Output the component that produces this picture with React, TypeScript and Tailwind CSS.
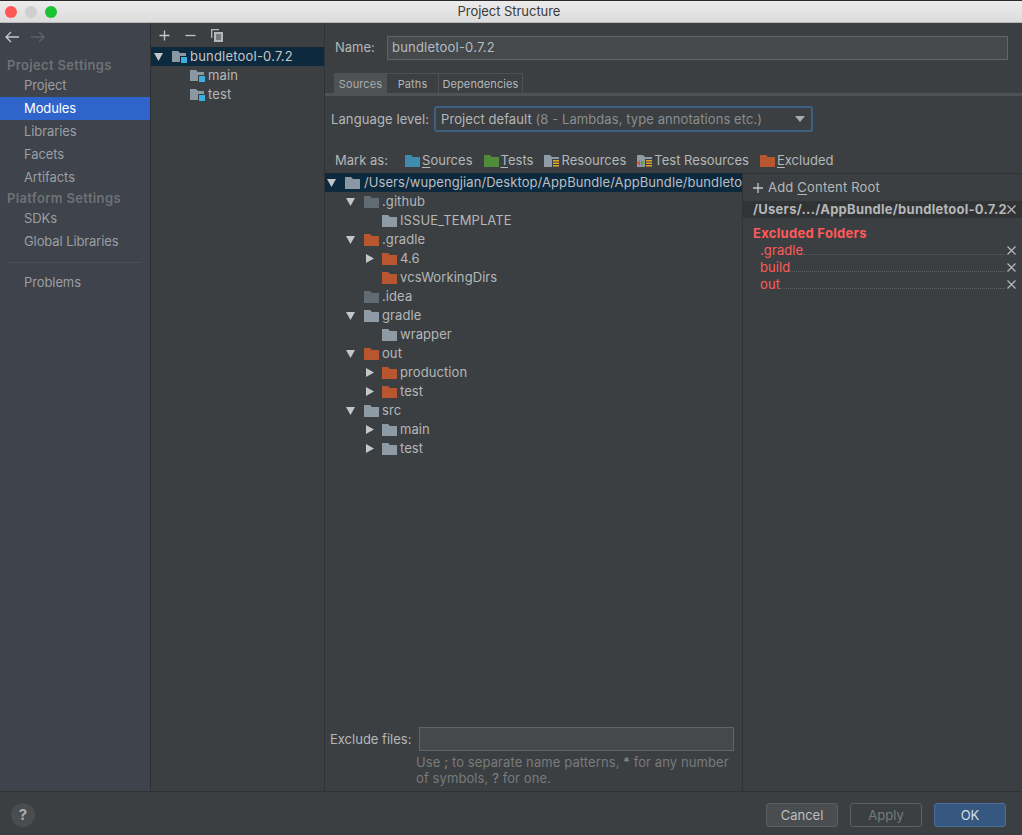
import type { ReactNode } from "react";

const FONT = { fontFamily: '"Inter", "Liberation Sans", sans-serif' };

type FolderProps = { color: string; badge?: boolean; className?: string };

function Folder({ color, badge, className }: FolderProps) {
  return (
    <svg width="15" height="13" viewBox="0 0 15 13" className={className}>
      {badge ? (
        <>
          <path d="M0 1h6l2 2h6v3H8v6H0z" fill={color} />
          <rect x="9" y="7" width="6" height="6" fill="#3bb0e0" />
        </>
      ) : (
        <path d="M0 1h6l2 2h7v10H0z" fill={color} />
      )}
    </svg>
  );
}

function Arrow({ open }: { open: boolean }) {
  return (
    <svg width="9" height="9" viewBox="0 0 9 9">
      {open ? <path d="M0 1h9L4.5 9z" fill="#c4c7c9" /> : <path d="M1 0l8 4.5L1 9z" fill="#c4c7c9" />}
    </svg>
  );
}

function CloseX() {
  return (
    <svg width="9" height="9" viewBox="0 0 9 9" className="shrink-0">
      <path d="M0.5 0.5l8 8M8.5 0.5l-8 8" stroke="#b4b7b9" strokeWidth="1.3" />
    </svg>
  );
}

type TreeRow = { depth: number; label: string; color: string; arrow?: "open" | "closed"; selected?: boolean };

const rows: TreeRow[] = [
  { depth: 0, label: "/Users/wupengjian/Desktop/AppBundle/AppBundle/bundletool-0.7.2", color: "#8a98a3", arrow: "open", selected: true },
  { depth: 1, label: ".github", color: "#626b72", arrow: "open" },
  { depth: 2, label: "ISSUE_TEMPLATE", color: "#8e9ba5" },
  { depth: 1, label: ".gradle", color: "#b8562f", arrow: "open" },
  { depth: 2, label: "4.6", color: "#b8562f", arrow: "closed" },
  { depth: 2, label: "vcsWorkingDirs", color: "#b8562f" },
  { depth: 1, label: ".idea", color: "#626b72" },
  { depth: 1, label: "gradle", color: "#8e9ba5", arrow: "open" },
  { depth: 2, label: "wrapper", color: "#8e9ba5" },
  { depth: 1, label: "out", color: "#b8562f", arrow: "open" },
  { depth: 2, label: "production", color: "#b8562f", arrow: "closed" },
  { depth: 2, label: "test", color: "#b8562f", arrow: "closed" },
  { depth: 1, label: "src", color: "#8e9ba5", arrow: "open" },
  { depth: 2, label: "main", color: "#8e9ba5", arrow: "closed" },
  { depth: 2, label: "test", color: "#8e9ba5", arrow: "closed" },
];

function SourceTree() {
  return (
    <div className="min-h-0 flex-1 overflow-hidden">
      {rows.map((r, i) => (
        <div key={i} className={`flex h-[19px] items-center whitespace-nowrap ${r.selected ? "bg-[#0d293e]" : ""}`}>
          <div className={`flex shrink-0 items-center ${r.depth === 0 ? "w-[20px] pl-[2px]" : r.depth === 1 ? "w-[39px] pl-[21px]" : "w-[57px] pl-[40px]"}`}>
            {r.arrow && <Arrow open={r.arrow === "open"} />}
          </div>
          <Folder color={r.color} className="shrink-0" />
          <span className={`text-[13px] tracking-[0.08px] ${r.depth === 0 ? "ml-[4px] text-[#bcbfc1]" : "ml-[3px] text-[#b4b7b9]"}`}>{r.label}</span>
        </div>
      ))}
    </div>
  );
}

function NavItem({ children, active }: { children: ReactNode; active?: boolean }) {
  return (
    <div className={`flex h-[23px] items-center pl-[24px] text-[13px] tracking-[-0.1px] ${active ? "bg-[#2f65ca] text-white" : "text-[#9b9fa3]"}`}>
      {children}
    </div>
  );
}

function NavHeading({ children }: { children: ReactNode }) {
  return <div className="flex h-[18px] items-center pl-[7px] pt-[2px] text-[13px] font-semibold tracking-[0.35px] text-[#6f7275]">{children}</div>;
}

function MarkItem({ icon, first, rest, className }: { icon: ReactNode; first: string; rest: string; className?: string }) {
  return (
    <div className={`flex items-center ${className ?? ""}`}>
      {icon}
      <span className="ml-[2px] text-[13px] tracking-[0.02px] text-[#b4b7b9]">
        <span className="underline underline-offset-2">{first}</span>
        {rest}
      </span>
    </div>
  );
}

function ResourceBars() {
  return <path d="M9 6h6v1.4H9zM9 8.5h6v1.4H9zM9 11h6v1.4H9z" fill="#e2a32e" />;
}

function ExcludedRow({ label }: { label: string }) {
  return (
    <div className="flex h-[17px] items-center pl-[17px] pr-[6px]">
      <span className="text-[13px] tracking-[0.1px] text-[#ff5a5a]">{label}</span>
      <div className="mr-[2px] mt-[7px] flex-1 border-b border-dotted border-[#5f6265]" />
      <CloseX />
    </div>
  );
}

function FooterButton({ label, className }: { label: string; className: string }) {
  return <div className={`flex h-[24px] w-[72px] items-center justify-center rounded-[3px] border pt-[1px] text-[13px] ${className}`}>{label}</div>;
}

export default function App() {
  return (
    <div className="flex h-[835px] w-[1022px] flex-col overflow-hidden bg-[#3c3f41]" style={FONT}>
      {/* title bar */}
      <div className="h-[1px] shrink-0 bg-[#2a2a2a]" />
      <div className="relative flex h-[22px] shrink-0 items-center justify-center border-b border-[#b9b9b9] bg-gradient-to-b from-[#ececec] to-[#dcdcdc]">
        <span className="mr-[4px] text-[13px] tracking-[-0.05px] text-[#3a3a3a]">Project Structure</span>
        <div className="absolute left-[5px] top-[5px] flex gap-[8px]">
          <div className="h-[12px] w-[12px] rounded-full bg-[#fc5753]" />
          <div className="h-[12px] w-[12px] rounded-full bg-[#cfcfcf]" />
          <div className="h-[12px] w-[12px] rounded-full bg-[#19c332]" />
        </div>
      </div>

      <div className="flex min-h-0 flex-1 border-b border-[#323232]">
        {/* sidebar */}
        <div className="flex w-[150px] shrink-0 flex-col bg-[#3e434c]">
          <div className="flex h-[28px] items-center gap-[12px] pl-[5px]">
            <svg width="14" height="12" viewBox="0 0 14 12">
              <path d="M6 1L1 6l5 5M1 6h13" fill="none" stroke="#c4c7c9" strokeWidth="1.4" />
            </svg>
            <svg width="14" height="12" viewBox="0 0 14 12">
              <path d="M8 1l5 5-5 5M13 6H0" fill="none" stroke="#5e6166" strokeWidth="1.4" />
            </svg>
          </div>
          <div className="mt-[5px]">
            <NavHeading>Project Settings</NavHeading>
          </div>
          <NavItem>Project</NavItem>
          <NavItem active>Modules</NavItem>
          <NavItem>Libraries</NavItem>
          <NavItem>Facets</NavItem>
          <NavItem>Artifacts</NavItem>
          <NavHeading>Platform Settings</NavHeading>
          <NavItem>SDKs</NavItem>
          <NavItem>Global Libraries</NavItem>
          <div className="mx-[8px] mt-[9px] border-t border-[#4c4f53]" />
          <div className="mt-[8px]">
            <NavItem>Problems</NavItem>
          </div>
        </div>

        {/* module list */}
        <div className="flex w-[175px] shrink-0 flex-col border-x border-[#2f3133] bg-[#3c3f41]">
          <div className="flex h-[24px] items-center gap-[15px] pl-[8px]">
            <svg width="11" height="11" viewBox="0 0 11 11">
              <path d="M5.5 0.5v10M0.5 5.5h10" stroke="#c4c7c9" strokeWidth="1.3" />
            </svg>
            <svg width="11" height="11" viewBox="0 0 11 11">
              <path d="M0.5 5.5h10" stroke="#c4c7c9" strokeWidth="1.3" />
            </svg>
            <svg width="12" height="13" viewBox="0 0 12 13">
              <path d="M0.7 9V0.7H8" fill="none" stroke="#b4b7b9" strokeWidth="1.3" />
              <path d="M3 3h9v10H3z" fill="#b4b7b9" />
              <path d="M5 6h5M5 8h5M5 10h5" stroke="#3c3f41" strokeWidth="1" />
            </svg>
          </div>
          <div className="flex h-[19px] items-center bg-[#0d293e]">
            <div className="flex w-[21px] pl-[3px]">
              <Arrow open />
            </div>
            <Folder color="#8a98a3" badge />
            <span className="ml-[3px] text-[13px] tracking-[0.2px] text-[#c4c7c9]">bundletool-0.7.2</span>
          </div>
          <div className="flex h-[19px] items-center pl-[39px]">
            <Folder color="#8a98a3" badge />
            <span className="ml-[3px] text-[13px] tracking-[0.1px] text-[#b4b7b9]">main</span>
          </div>
          <div className="flex h-[19px] items-center pl-[39px]">
            <Folder color="#8a98a3" badge />
            <span className="ml-[3px] text-[13px] tracking-[0.15px] text-[#b4b7b9]">test</span>
          </div>
        </div>

        {/* module detail */}
        <div className="flex min-w-0 flex-1 flex-col">
          <div className="flex h-[50px] shrink-0 items-center pl-[10px] pr-[14px]">
            <span className="w-[52px] text-[13px] text-[#b4b7b9]">Name:</span>
            <div className="flex h-[24px] flex-1 items-center border border-[#646464] bg-[#45494a] pl-[4px] text-[13px] tracking-[0.2px] text-[#b4bcc2]">
              bundletool-0.7.2
            </div>
          </div>
          <div className="flex h-[20px] shrink-0 pl-[9px] text-[11px] tracking-[0.1px] text-[#b4b7b9]">
            <div className="flex w-[53px] items-center justify-center bg-[#4e5254] pt-[2px] text-[#a9acae]">Sources</div>
            <div className="flex w-[51px] items-center justify-center border-t border-[#4e5254] pt-[2px]">Paths</div>
            <div className="flex w-[85px] items-center justify-center border-x border-t border-[#4e5254] pt-[2px]">Dependencies</div>
          </div>
          <div className="h-[3px] shrink-0 bg-[#4e5254]" />
          <div className="flex h-[46px] shrink-0 items-center pl-[6px]">
            <span className="w-[103px] pt-[1px] text-[13px] tracking-[0.1px] text-[#b4b7b9]">Language level:</span>
            <div className="flex h-[26px] w-[379px] items-center justify-between rounded-[3px] border-2 border-[#3d6185] bg-[#3c3f41] pl-[5px] pr-[6px] text-[13px] tracking-[0.08px]">
              <span className="pt-[1px]">
                <span className="text-[#b4b7b9]">Project default </span>
                <span className="text-[#8a8d8f]">(8 - Lambdas, type annotations etc.)</span>
              </span>
              <svg width="10" height="6" viewBox="0 0 10 6">
                <path d="M0 0h10L5 6z" fill="#a9acae" />
              </svg>
            </div>
          </div>
          <div className="flex h-[31px] shrink-0 items-center pl-[10px] pt-[6px]">
            <span className="w-[70px] text-[13px] tracking-[0.02px] text-[#b4b7b9]">Mark as:</span>
            <MarkItem first="S" rest="ources" icon={<Folder color="#3f8bad" />} />
            <MarkItem className="ml-[11px]" first="T" rest="ests" icon={<Folder color="#4f8b3a" />} />
            <MarkItem
              className="ml-[11px]"
              first=""
              rest="Resources"
              icon={
                <svg width="15" height="13" viewBox="0 0 15 13">
                  <path d="M0 1h6l2 2h7v10H0z" fill="#8e9ba5" />
                  <rect x="8" y="5" width="7" height="8" fill="#3c3f41" />
                  <ResourceBars />
                </svg>
              }
            />
            <MarkItem
              className="ml-[11px]"
              first=""
              rest="Test Resources"
              icon={
                <svg width="15" height="14" viewBox="0 0 15 14">
                  <path d="M0 1h6l2 2h7v10H0z" fill="#8e9ba5" />
                  <rect x="8" y="5" width="7" height="8" fill="#3c3f41" />
                  <ResourceBars />
                  <path d="M0 9l3-3v6z" fill="#d8552b" />
                  <path d="M4 6l3 3-3 3z" fill="#55a52e" />
                </svg>
              }
            />
            <MarkItem className="ml-[11px]" first="E" rest="xcluded" icon={<Folder color="#b8562f" />} />
          </div>

          <div className="flex min-h-0 flex-1">
            <div className="flex w-[418px] shrink-0 flex-col overflow-hidden border-r border-[#323232]">
              <SourceTree />
              <div className="flex h-[24px] shrink-0 items-center pl-[5px] pr-[8px]">
                <span className="w-[89px] pt-[1px] text-[13px] text-[#b4b7b9]">Exclude files:</span>
                <div className="h-[24px] flex-1 border border-[#646464] bg-[#45494a]" />
              </div>
              <div className="mb-[5px] mt-[3px] h-[32px] pl-[91px] pr-[4px] text-[13px] leading-[16px] tracking-[0.1px] text-[#787a7c]">
                Use <span className="text-[#8a8d8f]">;</span> to separate name patterns, <span className="text-[#8a8d8f]">*</span> for any number of symbols, <span className="text-[#8a8d8f]">?</span> for one.
              </div>
            </div>
            <div className="min-w-0 flex-1 border-t border-[#323232]">
              <div className="flex h-[27px] items-center pl-[10px] pt-[1px]">
                <svg width="10" height="10" viewBox="0 0 10 10">
                  <path d="M5 0v10M0 5h10" stroke="#c4c7c9" strokeWidth="1.3" />
                </svg>
                <span className="ml-[5px] text-[13px] tracking-[0.2px] text-[#b4b7b9]">
                  Add <span className="underline underline-offset-2">C</span>ontent Root
                </span>
              </div>
              <div className="flex h-[17px] items-center justify-between bg-[#313335] pl-[10px] pr-[6px] text-[13px] font-bold tracking-[0.25px] text-[#b4b7b9]">
                <span className="whitespace-nowrap">/Users/.../AppBundle/bundletool-0.7.2</span>
                <CloseX />
              </div>
              <div className="mt-[7px] flex h-[17px] items-center pl-[10px] text-[13px] font-bold tracking-[0.3px] text-[#ff5a5a]">Excluded Folders</div>
              <ExcludedRow label=".gradle" />
              <ExcludedRow label="build" />
              <ExcludedRow label="out" />
            </div>
          </div>
        </div>
      </div>

      {/* footer */}
      <div className="flex h-[43px] shrink-0 items-center pl-[11px] pr-[16px] pt-[3px]">
        <div className="flex h-[24px] w-[24px] items-center justify-center rounded-full bg-[#4a4d4f] text-[15px] font-bold text-[#a9acae]">?</div>
        <div className="ml-auto flex gap-[12px]">
          <FooterButton label="Cancel" className="border-[#5e6060] bg-[#4a4d4f] text-[#bcbfc1]" />
          <FooterButton label="Apply" className="border-[#5e6060] bg-[#3c3f41] text-[#777a7c]" />
          <FooterButton label="OK" className="border-[#4a6f9c] bg-[#365880] text-[#d6dde5]" />
        </div>
      </div>
    </div>
  );
}
